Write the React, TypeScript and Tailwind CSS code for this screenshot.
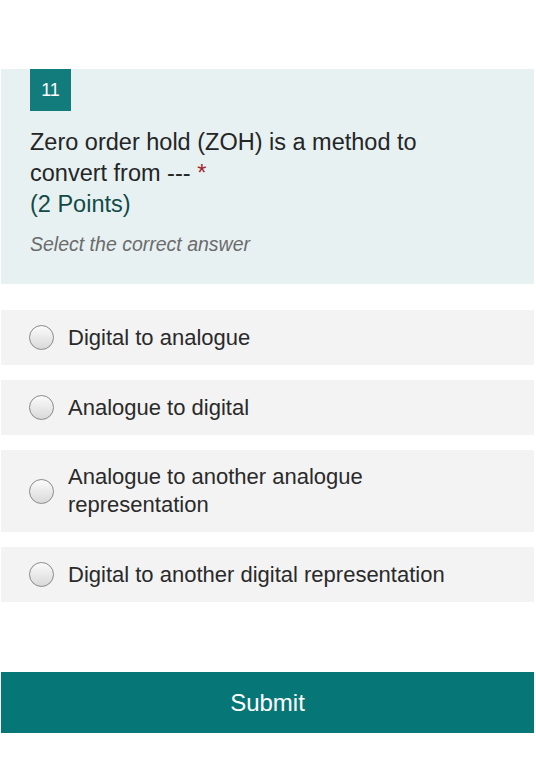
import React, { useState } from 'react';

const options = [
  'Digital to analogue',
  'Analogue to digital',
  'Analogue to another analogue representation',
  'Digital to another digital representation',
];

const Radio: React.FC<{ checked: boolean }> = ({ checked }) => (
  <span className="shrink-0 w-[25px] h-[25px] rounded-full border border-[#8a8a8a] bg-gradient-to-b from-[#fbfbfb] to-[#d9d9d9] flex items-center justify-center">
    {checked && <span className="w-[11px] h-[11px] rounded-full bg-[#077676]" />}
  </span>
);

const App: React.FC = () => {
  const [selected, setSelected] = useState<number | null>(null);

  return (
    <div className="w-[536px] h-[762px] bg-white flex flex-col font-['Liberation_Sans',Arial,sans-serif]">
      <div className="h-[69px] shrink-0" />

      {/* Question header */}
      <div className="ml-[1px] mr-[2px] bg-[#e7f1f2] pb-[29px]">
        <div className="ml-[29px] w-[41px] h-[42px] bg-[#117c7b] text-white text-[18px] flex items-center justify-center">
          11
        </div>
        <div className="px-[29px] pt-[16px] text-[23.5px] leading-[31px] text-[#252525]">
          <p className="w-[420px]">
            Zero order hold (ZOH) is a method to convert from --- <span className="text-[#a4262c]">*</span>
          </p>
          <p className="text-[#124a46]">(2 Points)</p>
        </div>
        <div className="px-[29px] pt-[13px] text-[19.5px] leading-[22px] italic text-[#6b6b6b]">
          Select the correct answer
        </div>
      </div>

      {/* Options */}
      <div className="mt-[26px] flex flex-col gap-[15px] ml-[1px] mr-[2px]">
        {options.map((opt, i) => (
          <button
            key={opt}
            onClick={() => setSelected(i)}
            className={`flex items-center gap-[14px] px-[28px] text-left bg-[#f3f3f3] ${i === 2 ? 'min-h-[82px]' : 'min-h-[55px]'}`}
          >
            <Radio checked={selected === i} />
            <span className="text-[22px] leading-[28px] text-[#2a2a2a] w-[400px]">{opt}</span>
          </button>
        ))}
      </div>

      <div className="flex-1" />

      <button className="ml-[1px] mr-[2px] mb-[29px] h-[61px] bg-[#077676] text-white text-[24px] flex items-center justify-center">
        Submit
      </button>
    </div>
  );
};

export default App;
